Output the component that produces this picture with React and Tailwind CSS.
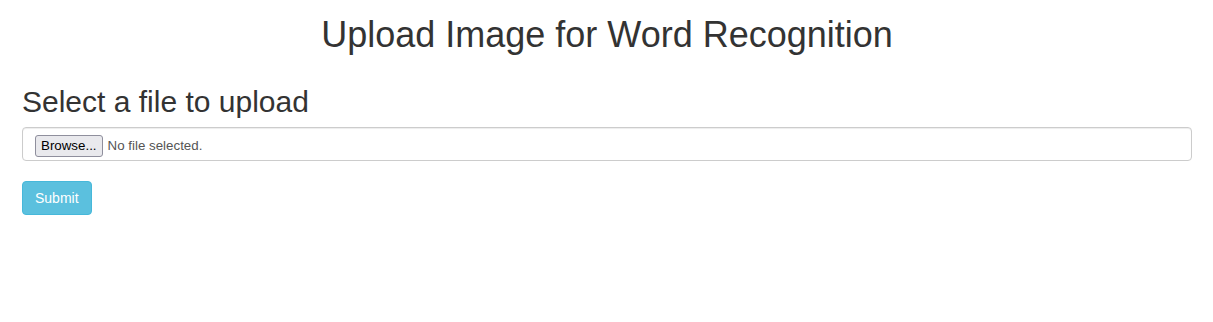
export default function App() {
  return (
    <div className="min-h-screen bg-white px-[22px] pr-[21px] text-[#333] font-['Liberation_Sans',Arial,sans-serif]">
      <h1 className="mt-[15px] text-center text-[36px] leading-[40px] font-normal">
        Upload Image for Word Recognition
      </h1>

      <h2 className="mt-[30px] mb-[9px] text-[30px] leading-[33px] font-normal">
        Select a file to upload
      </h2>

      <div className="flex h-[34px] items-center gap-[5px] rounded-[4px] border border-[#ccc] px-[12px] pt-[3px] shadow-[inset_0_1px_1px_rgba(0,0,0,0.075)]">
        <span className="flex h-[22px] items-center rounded-[3px] border border-[#8f8f9d] bg-[#e9e9ed] px-[5px] text-[13.33px] text-black">
          Browse...
        </span>
        <span className="pt-[1px] text-[13.33px] text-[#555]">No file selected.</span>
      </div>

      <button className="mt-[20px] h-[34px] rounded-[4px] border border-[#46b8da] bg-[#5bc0de] px-[12px] text-[14px] text-white">
        Submit
      </button>
    </div>
  );
}
